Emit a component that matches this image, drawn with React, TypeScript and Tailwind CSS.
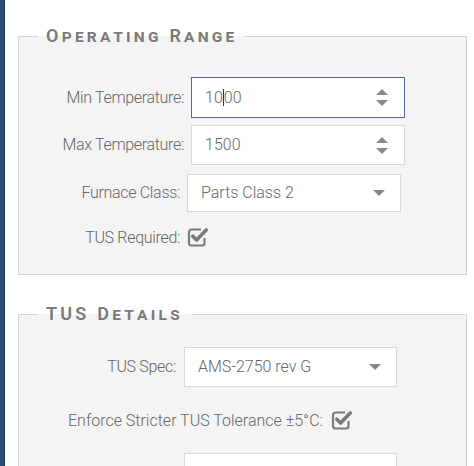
import React from 'react';

const CheckIcon: React.FC = () => (
  <svg width="21" height="21" viewBox="0 0 21 21" fill="none" className="shrink-0">
    <path
      d="M14 2.5H4.5A2.5 2.5 0 0 0 2 5v11A2.5 2.5 0 0 0 4.5 18.5H15a2.5 2.5 0 0 0 2.5-2.5V11"
      stroke="#7b7b7b"
      strokeWidth="2.2"
    />
    <path d="M5.8 9.2l3.8 3.8L19.2 3" stroke="#7b7b7b" strokeWidth="3.6" strokeLinecap="round" strokeLinejoin="round" />
  </svg>
);

const Spinner: React.FC = () => (
  <div className="flex flex-col items-center gap-[5px] mr-[16px]">
    <div className="w-0 h-0 border-l-[6px] border-r-[6px] border-b-[6px] border-l-transparent border-r-transparent border-b-[#8a8a8a]" />
    <div className="w-0 h-0 border-l-[6px] border-r-[6px] border-t-[6px] border-l-transparent border-r-transparent border-t-[#8a8a8a]" />
  </div>
);

const Caret: React.FC = () => (
  <div className="w-0 h-0 mr-[15px] border-l-[6px] border-r-[6px] border-t-[6px] border-l-transparent border-r-transparent border-t-[#888]" />
);

const Legend: React.FC<{ text: string }> = ({ text }) => (
  <legend className="ml-[19px] px-[8px] h-[20px] leading-[20px] text-[18px] font-semibold text-[#7a7a7a] tracking-[0.18em] [font-variant:small-caps]">
    {text}
  </legend>
);

export default function App() {
  return (
    <div className="w-[474px] h-[466px] overflow-hidden bg-white flex font-['Roboto',sans-serif] font-light text-[16px] text-[#666]">
      <div className="w-[5px] bg-[#2f4b79] border-r border-[#23395e] shrink-0" />
      <div className="flex-1 pl-[13px] pr-[7px] pt-[26px]">
        <fieldset className="border border-[#d4d4d4] bg-[#f4f4f4] h-[249px]">
          <Legend text="Operating Range" />
          <div className="flex items-center mt-[31px] h-[41px]">
            <span className="w-[165px] text-right tracking-[-0.02em]">Min Temperature:</span>
            <div className="ml-[7px] w-[214px] h-full bg-white border border-[#4f6a9c] flex items-center pl-[13px]">
              <span className="flex-1 flex items-center">
                10<span className="inline-block w-[1px] h-[17px] bg-[#333]" />00
              </span>
              <Spinner />
            </div>
          </div>
          <div className="flex items-center mt-[7px] h-[40px]">
            <span className="w-[165px] text-right tracking-[-0.02em]">Max Temperature:</span>
            <div className="ml-[7px] w-[214px] h-full bg-white border border-[#d8d8d8] flex items-center pl-[13px]">
              <span className="flex-1">1500</span>
              <Spinner />
            </div>
          </div>
          <div className="flex items-center mt-[9px] h-[38px]">
            <span className="w-[161px] text-right tracking-[-0.02em]">Furnace Class:</span>
            <div className="ml-[7px] w-[214px] h-full bg-white border border-[#d8d8d8] flex items-center pl-[13px]">
              <span className="flex-1">Parts Class 2</span>
              <Caret />
            </div>
          </div>
          <div className="flex items-center mt-[15px] h-[21px]">
            <span className="w-[161px] text-right tracking-[-0.02em]">TUS Required:</span>
            <span className="ml-[7px]">
              <CheckIcon />
            </span>
          </div>
        </fieldset>

        <fieldset className="border border-[#d4d4d4] bg-[#f4f4f4] h-[200px] mt-[29px]">
          <Legend text="TUS Details" />
          <div className="flex items-center mt-[23px] h-[40px]">
            <span className="w-[157px] text-right tracking-[-0.02em]">TUS Spec:</span>
            <div className="ml-[8px] w-[213px] h-full bg-white border border-[#d8d8d8] flex items-center pl-[13px]">
              <span className="flex-1">AMS-2750 rev G</span>
              <Caret />
            </div>
          </div>
          <div className="flex items-center mt-[23px] h-[21px]">
            <span className="ml-[49px]">Enforce Stricter TUS Tolerance ±5°C:</span>
            <span className="ml-[8px]">
              <CheckIcon />
            </span>
          </div>
          <div className="flex mt-[22px]">
            <div className="ml-[165px] w-[213px] h-[40px] bg-white border border-[#d8d8d8]" />
          </div>
        </fieldset>
      </div>
    </div>
  );
}
